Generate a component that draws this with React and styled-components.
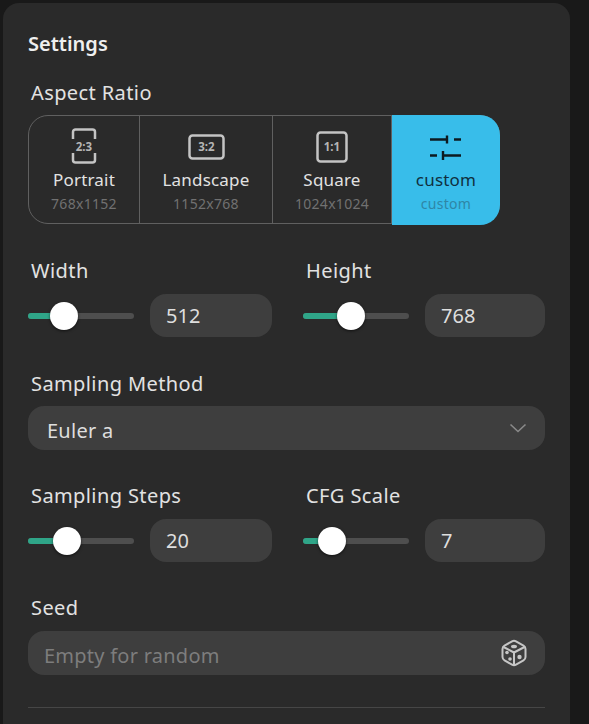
import React from "react";
import styled, { createGlobalStyle } from "styled-components";

const Global = createGlobalStyle`
  html, body { margin: 0; height: 724px; overflow: hidden; background: #191919; }
  * { box-sizing: border-box; }
  body { font-family: "Noto Sans", "Open Sans", sans-serif; color: #e4e4e4; }
`;

const Panel = styled.main`
  width: 567px;
  height: 760px;
  margin: 3px 0 0 3px;
  padding: 28px 25px 0 25px;
  background: #2a2a2a;
  border-radius: 16px 16px 0 0;
`;
const Title = styled.h2`
  margin: 0 0 23px;
  font-size: 20px;
  line-height: 26px;
  font-weight: 600;
  color: #efefef;
`;
const Label = styled.div`
  margin: 0 0 ${(p) => p.$gap ?? 10}px 3px;
  font-size: 20px;
  line-height: 26px;
  letter-spacing: 0.4px;
  color: #e2e2e2;
`;
const Segments = styled.div`
  display: flex;
  width: 472px;
  height: 109px;
  margin-bottom: 34px;
  border: 1.5px solid #606060;
  border-radius: 20px;
`;
const Segment = styled.div`
  width: ${(p) => p.$w}px;
  display: flex;
  flex-direction: column;
  align-items: center;
  margin: ${(p) => (p.$active ? "-1.5px -1.5px -1.5px 0" : "0")};
  padding-top: ${(p) => (p.$active ? 13 : 11.5)}px;
  border-right: ${(p) => (p.$active ? "none" : "1.5px solid #606060")};
  background: ${(p) => (p.$active ? "#38bdea" : "transparent")};
  border-radius: ${(p) => (p.$active ? "0 20px 20px 0" : "0")};
  color: ${(p) => (p.$active ? "#10303f" : "#e2e2e2")};
`;
const IconSlot = styled.div`
  height: 38px;
  display: flex;
  align-items: center;
  justify-content: center;
`;
const SegName = styled.div`
  margin-top: 2px;
  font-size: 17px;
  line-height: 24px;
  letter-spacing: 0.2px;
`;
const SegSub = styled.div`
  font-size: 14px;
  line-height: 20px;
  letter-spacing: 0.3px;
  margin-top: 2px;
  color: ${(p) => (p.$active ? "#2f86a6" : "#717171")};
`;
const Row = styled.div`
  display: grid;
  grid-template-columns: 244px 242px;
  column-gap: 31px;
  margin-bottom: ${(p) => p.$mb}px;
`;
const Field = styled.div``;
const Controls = styled.div`
  display: flex;
  align-items: center;
  gap: 16px;
`;
const Track = styled.div`
  position: relative;
  flex: 0 0 106px;
  height: 6px;
  border-radius: 3px;
  background: #4e4e4e;
`;
const Fill = styled.div`
  height: 100%;
  width: ${(p) => p.$pos}px;
  border-radius: 3px 0 0 3px;
  background: #2fa588;
`;
const Thumb = styled.div`
  position: absolute;
  top: 50%;
  left: ${(p) => p.$pos}px;
  width: 28px;
  height: 28px;
  margin: -14px 0 0 -14px;
  border-radius: 50%;
  background: #fff;
  box-shadow: 0 1px 3px rgba(0, 0, 0, 0.6);
`;
const NumberBox = styled.div`
  flex: 1;
  height: 43px;
  padding-left: 16px;
  display: flex;
  align-items: center;
  border-radius: 16px;
  background: #3e3e3e;
  font-size: 20px;
  color: #dedede;
`;
const Wide = styled.div`
  width: 517px;
  height: 44px;
  margin-bottom: ${(p) => p.$mb}px;
  padding: 0 ${(p) => p.$pr}px 0 ${(p) => p.$pl}px;
  display: flex;
  align-items: center;
  justify-content: space-between;
  border-radius: 16px;
  background: #3e3e3e;
`;
const WideText = styled.span`
  padding-top: 5px;
  font-size: 20px;
  letter-spacing: 0.25px;
  color: ${(p) => (p.$muted ? "#7d7d7d" : "#dedede")};
`;
const Divider = styled.hr`
  width: 517px;
  height: 1px;
  margin: 0;
  border: 0;
  background: #464646;
`;

const Glyph = styled.text`
  font-family: "Noto Sans", sans-serif;
  font-weight: 700;
  font-size: ${(p) => p.$size}px;
  fill: #b5b5b5;
`;

const Portrait = () => (
  <svg width="26" height="38" viewBox="0 0 26 38" fill="none" stroke="#c4c4c4" strokeWidth="2.5">
    <path d="M2 11V4a2.5 2.5 0 0 1 2.5-2.5h17A2.5 2.5 0 0 1 24 4v7" />
    <path d="M2 25v7a2.5 2.5 0 0 0 2.5 2.5h17A2.5 2.5 0 0 0 24 32v-7" />
    <Glyph x="13" y="22.5" textAnchor="middle" $size="11.5" stroke="none">2:3</Glyph>
  </svg>
);
const Landscape = () => (
  <svg width="37" height="26" viewBox="0 0 37 26" fill="none" stroke="#c4c4c4" strokeWidth="2.5">
    <rect x="1.5" y="1.5" width="34" height="23" rx="3" />
    <Glyph x="18.5" y="17" textAnchor="middle" $size="11.5" stroke="none">3:2</Glyph>
  </svg>
);
const Square = () => (
  <svg width="32" height="32" viewBox="0 0 32 32" fill="none" stroke="#c4c4c4" strokeWidth="2.5">
    <rect x="1.5" y="1.5" width="29" height="29" rx="3" />
    <Glyph x="16" y="20" textAnchor="middle" $size="11.5" stroke="none">1:1</Glyph>
  </svg>
);
const Sliders = () => (
  <svg width="32" height="32" viewBox="0 0 32 32" fill="none" stroke="#0d1a20" strokeWidth="2.4">
    <path d="M0 8.5h17M17 4.5v8M24 8.5h7M0 24.5h7M13 20v9M13 24.5h18" />
  </svg>
);
const Chevron = () => (
  <svg width="18" height="12" viewBox="0 0 18 12" fill="none" stroke="#8a8a8a" strokeWidth="1.6">
    <path d="M1.5 2.5 9 9.5l7.5-7" />
  </svg>
);
const Dice = () => (
  <svg width="28" height="28" viewBox="0 0 28 28" fill="none" stroke="#c6c6c6" strokeWidth="2" strokeLinejoin="round">
    <path d="M12 2.4a4 4 0 0 1 4 0l7.5 4.2a4 4 0 0 1 2 3.4v8a4 4 0 0 1-2 3.4L16 25.6a4 4 0 0 1-4 0l-7.5-4.2a4 4 0 0 1-2-3.4v-8a4 4 0 0 1 2-3.4Z" />
    <path d="M3.5 8 14 13.5 24.5 8M14 13.5V26" />
    <ellipse cx="14" cy="7.5" rx="3" ry="1.8" fill="#c6c6c6" stroke="none" />
    <circle cx="7" cy="13.5" r="1.8" fill="#c6c6c6" stroke="none" />
    <circle cx="10" cy="20" r="1.8" fill="#c6c6c6" stroke="none" />
    <circle cx="19.5" cy="18" r="2.2" fill="#c6c6c6" stroke="none" />
  </svg>
);

const segments = [
  { w: 111, name: "Portrait", sub: "768x1152", icon: <Portrait /> },
  { w: 133, name: "Landscape", sub: "1152x768", icon: <Landscape /> },
  { w: 119, name: "Square", sub: "1024x1024", icon: <Square /> },
  { w: 108, name: "custom", sub: "custom", icon: <Sliders />, active: true },
];

const Slider = ({ label, value, pos }) => (
  <Field>
    <Label $gap={10}>{label}</Label>
    <Controls>
      <Track>
        <Fill $pos={pos} />
        <Thumb $pos={pos} />
      </Track>
      <NumberBox>{value}</NumberBox>
    </Controls>
  </Field>
);

export default function App() {
  return (
    <>
      <Global />
      <Panel>
        <Title>Settings</Title>
        <Label $gap={9}>Aspect Ratio</Label>
        <Segments>
          {segments.map((s) => (
            <Segment key={s.name} $w={s.w} $active={s.active}>
              <IconSlot>{s.icon}</IconSlot>
              <SegName>{s.name}</SegName>
              <SegSub $active={s.active}>{s.sub}</SegSub>
            </Segment>
          ))}
        </Segments>
        <Row $mb={34}>
          <Slider label="Width" value="512" pos={36} />
          <Slider label="Height" value="768" pos={48} />
        </Row>
        <Label $gap={9}>Sampling Method</Label>
        <Wide $mb={33} $pl={19} $pr={18}>
          <WideText>Euler a</WideText>
          <Chevron />
        </Wide>
        <Row $mb={33}>
          <Slider label="Sampling Steps" value="20" pos={39} />
          <Slider label="CFG Scale" value="7" pos={29} />
        </Row>
        <Label $gap={10}>Seed</Label>
        <Wide $mb={32} $pl={16} $pr={17}>
          <WideText $muted>Empty for random</WideText>
          <Dice />
        </Wide>
        <Divider />
      </Panel>
    </>
  );
}
